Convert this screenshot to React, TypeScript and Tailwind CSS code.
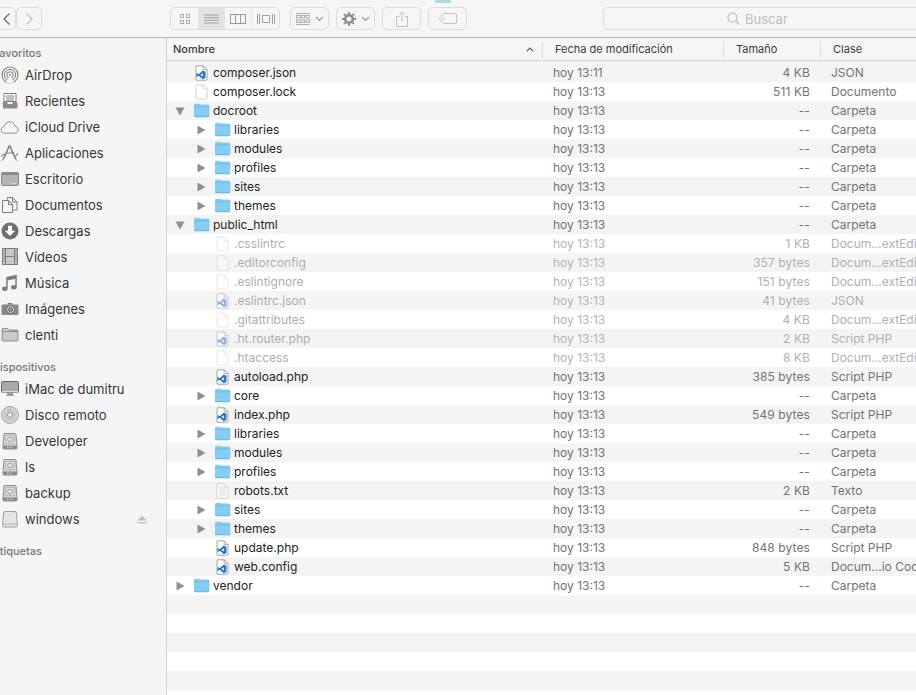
import type { ReactNode } from "react"

type Row = {
  name: string
  level: 0 | 1
  icon: "folder" | "file" | "code" | "text"
  arrow?: "right" | "down"
  date?: string
  size: string
  kind: string
  dim?: boolean
}

const rows: Row[] = [
  { name: "composer.json", level: 0, icon: "code", date: "hoy 13:11", size: "4 KB", kind: "JSON" },
  { name: "composer.lock", level: 0, icon: "file", size: "511 KB", kind: "Documento" },
  { name: "docroot", level: 0, icon: "folder", arrow: "down", size: "--", kind: "Carpeta" },
  { name: "libraries", level: 1, icon: "folder", arrow: "right", size: "--", kind: "Carpeta" },
  { name: "modules", level: 1, icon: "folder", arrow: "right", size: "--", kind: "Carpeta" },
  { name: "profiles", level: 1, icon: "folder", arrow: "right", size: "--", kind: "Carpeta" },
  { name: "sites", level: 1, icon: "folder", arrow: "right", size: "--", kind: "Carpeta" },
  { name: "themes", level: 1, icon: "folder", arrow: "right", size: "--", kind: "Carpeta" },
  { name: "public_html", level: 0, icon: "folder", arrow: "down", size: "--", kind: "Carpeta" },
  { name: ".csslintrc", level: 1, icon: "file", size: "1 KB", kind: "Docum...extEdit", dim: true },
  { name: ".editorconfig", level: 1, icon: "file", size: "357 bytes", kind: "Docum...extEdit", dim: true },
  { name: ".eslintignore", level: 1, icon: "file", size: "151 bytes", kind: "Docum...extEdit", dim: true },
  { name: ".eslintrc.json", level: 1, icon: "code", size: "41 bytes", kind: "JSON", dim: true },
  { name: ".gitattributes", level: 1, icon: "file", size: "4 KB", kind: "Docum...extEdit", dim: true },
  { name: ".ht.router.php", level: 1, icon: "code", size: "2 KB", kind: "Script PHP", dim: true },
  { name: ".htaccess", level: 1, icon: "file", size: "8 KB", kind: "Docum...extEdit", dim: true },
  { name: "autoload.php", level: 1, icon: "code", size: "385 bytes", kind: "Script PHP" },
  { name: "core", level: 1, icon: "folder", arrow: "right", size: "--", kind: "Carpeta" },
  { name: "index.php", level: 1, icon: "code", size: "549 bytes", kind: "Script PHP" },
  { name: "libraries", level: 1, icon: "folder", arrow: "right", size: "--", kind: "Carpeta" },
  { name: "modules", level: 1, icon: "folder", arrow: "right", size: "--", kind: "Carpeta" },
  { name: "profiles", level: 1, icon: "folder", arrow: "right", size: "--", kind: "Carpeta" },
  { name: "robots.txt", level: 1, icon: "text", size: "2 KB", kind: "Texto" },
  { name: "sites", level: 1, icon: "folder", arrow: "right", size: "--", kind: "Carpeta" },
  { name: "themes", level: 1, icon: "folder", arrow: "right", size: "--", kind: "Carpeta" },
  { name: "update.php", level: 1, icon: "code", size: "848 bytes", kind: "Script PHP" },
  { name: "web.config", level: 1, icon: "code", size: "5 KB", kind: "Docum...io Code" },
  { name: "vendor", level: 0, icon: "folder", arrow: "right", size: "--", kind: "Carpeta" },
]

function Svg({ children, w = 18, h = 18 }: { children: ReactNode; w?: number; h?: number }) {
  return (
    <svg width={w} height={h} viewBox={`0 0 ${w} ${h}`} fill="none">
      {children}
    </svg>
  )
}

function Folder() {
  return (
    <Svg w={17} h={15}>
      <path d="M1 2.400C1 1.300 1.600.7 2.600.7h3.600c.8 0 1.100.9 1.900.9h6.600c1 0 1.800.7 1.800 1.700v9.300c0 1-.7 1.600-1.700 1.600H2.600c-1 0-1.600-.6-1.600-1.600z" fill="#86cdf2" />
      <path d="M1 3.700h15" stroke="#62b4e4" strokeWidth="0.700" />
      <path d="M1.200 13.600h14.600" stroke="#64b3df" strokeWidth="0.800" />
    </Svg>
  )
}

function PlainFile({ dim, lines }: { dim?: boolean; lines?: boolean }) {
  return (
    <span className={dim ? "opacity-50" : ""}>
      <Svg w={13} h={16}>
        <path d="M1 1.500c0-.4.2-.7.7-.7h6.600L12 4.500v10c0 .4-.3.7-.7.7H1.700c-.5 0-.7-.3-.7-.7z" fill="#fff" stroke="#c6c6c6" strokeWidth="0.800" />
        <path d="M8.200 1v3.600H12" stroke="#d0d0d0" strokeWidth="0.800" />
        {lines && <path d="M3 4h4M3 6h7M3 8h7M3 10h7M3 12h7" stroke="#bcbcbc" strokeWidth="0.600" />}
      </Svg>
    </span>
  )
}

function CodeFile({ dim }: { dim?: boolean }) {
  return (
    <span className={dim ? "opacity-50" : ""}>
      <Svg w={13} h={16}>
        <path d="M1 1.500c0-.4.2-.7.7-.7h6.600L12 4.500v10c0 .4-.3.7-.7.7H1.700c-.5 0-.7-.3-.7-.7z" fill="#fff" stroke="#8d8d8d" strokeWidth="0.800" />
        <path d="M8.200 1v3.600H12" stroke="#9a9a9a" strokeWidth="0.800" />
        <path d="M7.800 5.500 10.500 6.800V13L7.800 14.200 3.600 10.800 2 12 1.500 11.500V8.500L2 8 3.600 9.200zM7.800 8.200 5.400 9.900 7.800 11.600z" fill="#2578c6" fillRule="evenodd" />
      </Svg>
    </span>
  )
}

function Arrow({ dir }: { dir: "right" | "down" }) {
  return (
    <svg width="10" height="10" viewBox="0 0 10 10">
      {dir === "right" ? <path d="M1.500 0.500 9.500 5l-8 4.500z" fill="#8f8f8f" /> : <path d="M0.500 1.500h9L5 9.500z" fill="#8f8f8f" />}
    </svg>
  )
}

const g = "#7c7c7c"

const sideIcons: Record<string, ReactNode> = {
  airdrop: (
    <Svg>
      <circle cx="9" cy="9" r="8" stroke={g} strokeWidth="1.100" />
      <circle cx="9" cy="9" r="5.600" stroke={g} strokeWidth="1" />
      <circle cx="9" cy="9" r="3.200" stroke={g} strokeWidth="1" />
      <circle cx="9" cy="9" r="1.100" fill={g} />
      <path d="M5 17.500 9 9l4 8.500z" fill="#f5f5f5" />
    </Svg>
  ),
  recent: (
    <Svg>
      <path d="M3 1.500h12v8H3z" fill="#fff" stroke={g} />
      <path d="M5 4h8M5 6h8M5 8h8" stroke={g} />
      <path d="M1.500 10h4.500l1 2h4l1-2h4.500v5.500c0 .6-.4 1-1 1h-12.500c-.6 0-1-.4-1-1z" fill="#8c8c8c" />
    </Svg>
  ),
  cloud: (
    <Svg w={20}>
      <path d="M5 15.500c-2.200 0-3.800-1.500-3.800-3.500 0-1.900 1.500-3.300 3.200-3.500C5 5.500 7.500 3.500 10.300 3.500c2.900 0 5 2 5.400 4.700 2 .2 3.300 1.800 3.300 3.700 0 2-1.600 3.600-3.600 3.600z" stroke={g} strokeWidth="0.900" />
    </Svg>
  ),
  apps: (
    <Svg w={20}>
      <path d="M10 1 3.500 15.500M10 1l6.500 14.500" stroke={g} strokeWidth="1.500" />
      <path d="M1 12.500 5 10M6 9l9 0M19 9.500l-3 3" stroke={g} strokeWidth="1.100" />
      <path d="M1.500 17l2-1.500M18.500 17l-2-1.500" stroke={g} />
    </Svg>
  ),
  desktop: (
    <Svg>
      <rect x="0.500" y="2.500" width="17" height="13" rx="1" fill="#b4b4b4" stroke="#8a8a8a" />
      <rect x="1" y="3" width="16" height="2" fill="#8a8a8a" />
      <path d="M10 13.500h5" stroke="#eee" strokeWidth="1" strokeDasharray="1 1" />
    </Svg>
  ),
  docs: (
    <Svg>
      <path d="M6.500 3.500v-2h5l4.500 4.500v8h-4" stroke={g} fill="#f5f5f5" />
      <path d="M1.500 4.500h6l4 4v8h-10z" fill="#f5f5f5" stroke={g} />
      <path d="M11.500 1.500v4.500h4.500M7.500 4.500v4h4" stroke={g} />
    </Svg>
  ),
  downloads: (
    <Svg>
      <circle cx="9" cy="9" r="8.500" fill="#6f6f6f" />
      <path d="M7 3.800h4v5h3.200L9 14 3.800 8.800H7z" fill="#fff" />
    </Svg>
  ),
  video: (
    <Svg>
      <rect x="1.500" y="0.500" width="15" height="16" fill="#c9c9c9" stroke={g} />
      <path d="M4.500 1v15M13.500 1v15M4.500 8.500h9" stroke={g} />
      <path d="M1.500 3h3M1.500 5.500h3M1.500 8h3M1.500 10.500h3M1.500 13h3M13.500 3h3M13.500 5.500h3M13.500 8h3M13.500 10.500h3M13.500 13h3" stroke={g} strokeWidth="0.800" />
    </Svg>
  ),
  music: (
    <Svg>
      <path d="M6 14.500V3.500l9-1.800V13" stroke={g} strokeWidth="1.500" />
      <path d="M6 3.500l9-1.800v3l-9 1.800z" fill={g} />
      <ellipse cx="3.800" cy="14.800" rx="2.800" ry="2.200" fill={g} />
      <ellipse cx="12.800" cy="13.300" rx="2.800" ry="2.200" fill={g} />
    </Svg>
  ),
  images: (
    <Svg>
      <rect x="0.500" y="4.500" width="17" height="10.500" rx="1" fill="#8a8a8a" />
      <path d="M6 4.500l1-1.500h4l1 1.500z" fill={g} />
      <circle cx="9.500" cy="9.500" r="4" fill="#d8d8d8" stroke="#666" />
      <circle cx="9.500" cy="9.500" r="2" fill="#999" stroke="#666" />
    </Svg>
  ),
  folder: (
    <Svg>
      <path d="M1 3.500c0-.6.4-1 1-1h4.500l1.500 1.500h8c.6 0 1 .4 1 1v9c0 .6-.4 1-1 1H2c-.6 0-1-.4-1-1z" fill="#c9c9c9" stroke={g} strokeWidth="0.800" />
      <path d="M1 5.500h16" stroke={g} strokeWidth="0.800" />
    </Svg>
  ),
  imac: (
    <Svg>
      <rect x="0.500" y="1.500" width="17" height="11" rx="1" fill="#a9a9a9" stroke="#666" />
      <path d="M1 11h16v1.500H1z" fill="#dcdcdc" />
      <path d="M6.500 13v2h5v-2zM5 15.500h8" fill="#aaa" stroke="#8d8d8d" strokeWidth="0.700" />
    </Svg>
  ),
  cd: (
    <Svg>
      <circle cx="9" cy="9" r="8.500" fill="#d2d2d2" stroke="#a8a8a8" />
      <circle cx="9" cy="9" r="5" stroke="#bcbcbc" />
      <circle cx="9" cy="9" r="2.500" fill="#f2f2f2" stroke="#8d8d8d" />
    </Svg>
  ),
  disk: (
    <Svg>
      <path d="M3 1.500h11c.6 0 1 .4 1 1l1 11.500v2c0 .6-.4 1-1 1H3c-.6 0-1-.4-1-1v-2l1-12.500z" fill="#d4d4d4" stroke="#777" strokeWidth="0.800" />
      <rect x="2.200" y="13.500" width="13.600" height="3.300" fill="#8b8b8b" />
      <path d="M6 15.200h6" stroke="#eee" strokeDasharray="1 1" />
      <rect x="5" y="3.500" width="8" height="8" rx="0.500" fill="#e6e6e6" stroke="#999" strokeWidth="0.600" />
      <circle cx="9" cy="7.500" r="2.400" stroke="#888" strokeWidth="0.800" />
    </Svg>
  ),
  external: (
    <Svg>
      <path d="M4 1.500h10c.8 0 1.300.5 1.400 1.300l1 11.200v1.500c0 .9-.6 1.500-1.500 1.500H3.100c-.9 0-1.500-.6-1.500-1.500V14l1-11.200c.1-.8.600-1.300 1.400-1.300z" fill="#e4e4e4" stroke="#8b8b8b" strokeWidth="0.800" />
      <path d="M2 14h14" stroke="#a5a5a5" strokeWidth="0.800" />
    </Svg>
  ),
}

function SideItem({ icon, label, eject }: { icon: string; label: string; eject?: boolean }) {
  return (
    <div className="flex h-[26px] items-center">
      <div className="flex w-[25px] justify-center pr-[6px]">{sideIcons[icon]}</div>
      <span className="text-[13px] leading-none text-[#363636]">{label}</span>
      {eject && (
        <svg className="ml-auto mr-[19px]" width="10" height="9" viewBox="0 0 10 9">
          <path d="M5 0.500 9.500 5.500h-9zM0.500 7h9v1.500h-9z" fill="#c2c2c2" />
        </svg>
      )}
    </div>
  )
}

function Sidebar() {
  return (
    <aside className="w-[167px] shrink-0 overflow-hidden border-r border-[#d3d3d3] bg-[#f5f5f5]">
      <div className="-ml-[7px] mt-[7px] h-[16px] text-[11px] font-medium leading-[16px] text-[#777]">Favoritos</div>
      <div className="mt-[1px]">
        <SideItem icon="airdrop" label="AirDrop" />
        <SideItem icon="recent" label="Recientes" />
        <SideItem icon="cloud" label="iCloud Drive" />
        <SideItem icon="apps" label="Aplicaciones" />
        <SideItem icon="desktop" label="Escritorio" />
        <SideItem icon="docs" label="Documentos" />
        <SideItem icon="downloads" label="Descargas" />
        <SideItem icon="video" label="Vídeos" />
        <SideItem icon="music" label="Música" />
        <SideItem icon="images" label="Imágenes" />
        <SideItem icon="folder" label="clenti" />
      </div>
      <div className="-ml-[8px] mt-[11px] h-[16px] text-[11px] font-medium leading-[16px] text-[#777]">Dispositivos</div>
      <div className="mt-[1px]">
        <SideItem icon="imac" label="iMac de dumitru" />
        <SideItem icon="cd" label="Disco remoto" />
        <SideItem icon="disk" label="Developer" />
        <SideItem icon="disk" label="ls" />
        <SideItem icon="disk" label="backup" />
        <SideItem icon="external" label="windows" eject />
      </div>
      <div className="-ml-[7px] mt-[11px] h-[16px] text-[11px] font-medium leading-[16px] text-[#777]">Etiquetas</div>
    </aside>
  )
}

function Chevron() {
  return (
    <svg width="9" height="6" viewBox="0 0 9 6" fill="none">
      <path d="M1 1l3.500 3.500L8 1" stroke="#9a9a9a" strokeWidth="1.100" />
    </svg>
  )
}

const toolBtn = "flex h-[23px] shrink-0 items-center justify-center rounded-[5px] border border-[#dcdcdc]"

function Toolbar() {
  return (
    <header className="relative flex h-[38px] shrink-0 items-start border-b border-[#b9b9b9] bg-[#f6f6f6] pt-[7px]">
      <div className="absolute left-[435px] top-0 h-[3px] w-[16px] bg-[#b7d6e6]" />
      <div className={`${toolBtn} -ml-[10px] w-[26px]`}>
        <svg className="ml-[6px]" width="9" height="14" viewBox="0 0 9 14" fill="none">
          <path d="M7.500 1.500 2 7l5.500 5.500" stroke="#6c6c6c" strokeWidth="1.300" />
        </svg>
      </div>
      <div className={`${toolBtn} w-[26px]`}>
        <svg width="9" height="14" viewBox="0 0 9 14" fill="none">
          <path d="M1.500 1.500 7 7l-5.500 5.500" stroke="#c2c2c2" strokeWidth="1.300" />
        </svg>
      </div>

      <div className="ml-[128px] flex h-[23px] w-[110px] shrink-0 overflow-hidden rounded-[5px] border border-[#dcdcdc]">
        <div className="flex w-[27px] items-center justify-center">
          <svg width="12" height="12" viewBox="0 0 12 12" fill="none" stroke="#adadad">
            <rect x="1.500" y="1.500" width="3" height="3" />
            <rect x="7.500" y="1.500" width="3" height="3" />
            <rect x="1.500" y="7.500" width="3" height="3" />
            <rect x="7.500" y="7.500" width="3" height="3" />
          </svg>
        </div>
        <div className="flex w-[27px] items-center justify-center bg-[#e3e3e3]">
          <svg width="15" height="10" viewBox="0 0 15 10" stroke="#8f8f8f">
            <path d="M0 1h15M0 3.700h15M0 6.300h15M0 9h15" strokeWidth="0.800" />
          </svg>
        </div>
        <div className="flex w-[27px] items-center justify-center border-r border-[#e6e6e6]">
          <svg width="16" height="10" viewBox="0 0 16 10" fill="none" stroke="#9a9a9a">
            <rect x="0.500" y="0.500" width="15" height="9" />
            <path d="M5.500 0v10M10.500 0v10" />
          </svg>
        </div>
        <div className="flex flex-1 items-center justify-center">
          <svg width="18" height="10" viewBox="0 0 18 10" fill="none" stroke="#a2a2a2">
            <rect x="5.500" y="1.500" width="7" height="7" />
            <path d="M0.500 0v10M2.500 0v10M15.500 0v10M17.500 0v10" />
          </svg>
        </div>
      </div>

      <div className={`${toolBtn} ml-[10px] w-[39px] gap-[5px]`}>
        <svg width="14" height="12" viewBox="0 0 14 12" fill="none" stroke="#a0a0a0" strokeWidth="0.800">
          <path d="M0 .5h14M0 11.500h14" />
          <rect x="0.500" y="2.500" width="3.500" height="2.500" />
          <rect x="5.200" y="2.500" width="3.500" height="2.500" />
          <rect x="10" y="2.500" width="3.500" height="2.500" />
          <rect x="0.500" y="7" width="3.500" height="2.500" />
          <rect x="5.200" y="7" width="3.500" height="2.500" />
          <rect x="10" y="7" width="3.500" height="2.500" />
        </svg>
        <Chevron />
      </div>
      <div className={`${toolBtn} ml-[7px] w-[39px] gap-[5px]`}>
        <svg width="14" height="14" viewBox="0 0 14 14" fill="none">
          <circle cx="7" cy="7" r="3.800" stroke="#8c8c8c" strokeWidth="2.600" />
          <path d="M7 0v14M0 7h14M2 2l10 10M12 2 2 12" stroke="#8c8c8c" strokeWidth="2" strokeDasharray="2.200 9.600" />
        </svg>
        <Chevron />
      </div>
      <div className={`${toolBtn} ml-[7px] w-[39px]`}>
        <svg width="12" height="16" viewBox="0 0 12 16" fill="none" stroke="#c0c0c0">
          <path d="M3.500 5.500h-3v10h11v-10h-3M6 10V1M3.500 3.300 6 .8l2.500 2.500" />
        </svg>
      </div>
      <div className={`${toolBtn} ml-[7px] w-[39px]`}>
        <svg width="18" height="11" viewBox="0 0 18 11" fill="none" stroke="#c4c4c4">
          <path d="M4.500 .5h12c.6 0 1 .4 1 1v8c0 .6-.4 1-1 1h-12L.5 5.500z" />
          <circle cx="4.500" cy="5.500" r="0.800" />
        </svg>
      </div>

      <div className="ml-[136px] flex h-[23px] w-[330px] shrink-0 items-center rounded-[5px] border border-[#dcdcdc] pl-[123px]">
        <svg width="13" height="13" viewBox="0 0 13 13" fill="none" stroke="#b0b0b0" strokeWidth="1.100">
          <circle cx="5.500" cy="5.500" r="4.500" />
          <path d="M8.800 8.800 12.500 12.500" />
        </svg>
        <span className="ml-[5px] pt-[1px] text-[13px] leading-none text-[#bdbdbd]">Buscar</span>
      </div>
    </header>
  )
}

function ColHeader() {
  return (
    <div className="flex h-[23px] shrink-0 items-center border-b border-[#d2d2d2] bg-[#f6f6f6] text-[11px] leading-none text-[#3c3c3c]">
      <div className="flex h-[17px] w-[376px] items-center justify-between border-r border-[#dedede] pl-[6px] pr-[8px] font-medium">
        <span>Nombre</span>
        <svg width="8" height="5" viewBox="0 0 8 5" fill="none">
          <path d="M.7 4.300 4 1l3.300 3.300" stroke="#555" strokeWidth="1.100" />
        </svg>
      </div>
      <div className="flex h-[17px] w-[181px] items-center border-r border-[#dedede] pl-[12px]">Fecha de modificación</div>
      <div className="flex h-[17px] w-[97px] items-center border-r border-[#dedede] pl-[12px]">Tamaño</div>
      <div className="pl-[12px]">Clase</div>
    </div>
  )
}

function FileRow({ row, index }: { row: Row; index: number }) {
  const stripe = index % 2 === 0 ? "bg-[#f4f4f4]" : "bg-white"
  return (
    <div className={`flex h-[19px] shrink-0 items-center text-[12px] leading-none ${stripe}`}>
      <div className={`flex w-[376px] items-center ${row.level === 1 ? "pl-[21px]" : ""}`}>
        <div className="flex w-[26px] justify-center">{row.arrow && <Arrow dir={row.arrow} />}</div>
        <div className="flex h-[19px] w-[17px] items-center justify-center">
          {row.icon === "folder" && <Folder />}
          {row.icon === "file" && <PlainFile dim={row.dim} />}
          {row.icon === "text" && <PlainFile lines />}
          {row.icon === "code" && <CodeFile dim={row.dim} />}
        </div>
        <span className={`ml-[3px] ${row.dim ? "text-[#aeaeae]" : "text-[#222]"}`}>{row.name}</span>
      </div>
      <div className={`w-[181px] pl-[10px] ${row.dim ? "text-[#b4b4b4]" : "text-[#737373]"}`}>{row.date ?? "hoy 13:13"}</div>
      <div className={`w-[86px] text-right tracking-[0.1px] ${row.dim ? "text-[#b0b0b0]" : "text-[#737373]"}`}>{row.size}</div>
      <div className={`min-w-0 flex-1 overflow-hidden whitespace-nowrap pl-[21px] ${row.dim ? "text-[#b0b0b0]" : "text-[#737373]"}`}>{row.kind}</div>
    </div>
  )
}

export default function App() {
  return (
    <div className="flex h-[695px] w-[916px] flex-col overflow-hidden bg-white font-['Inter',sans-serif]">
      <Toolbar />
      <div className="flex min-h-0 flex-1">
        <Sidebar />
        <main className="flex min-w-0 flex-1 flex-col overflow-hidden">
          <ColHeader />
          <div className="h-[2px] shrink-0 bg-[#f4f4f4]" />
          {rows.map((row, i) => (
            <FileRow key={i} row={row} index={i} />
          ))}
          {[28, 29, 30, 31, 32, 33].map((i) => (
            <div key={i} className={`h-[19px] shrink-0 ${i % 2 === 0 ? "bg-[#f4f4f4]" : "bg-white"}`} />
          ))}
        </main>
      </div>
    </div>
  )
}
